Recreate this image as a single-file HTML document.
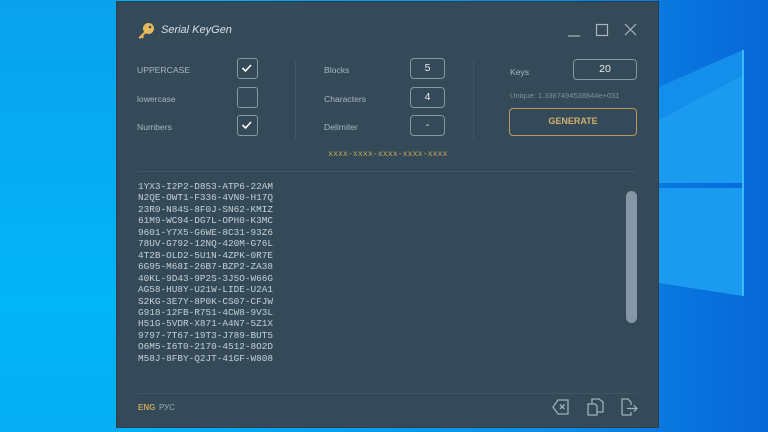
<!DOCTYPE html>
<html><head><meta charset="utf-8"><style>
*{margin:0;padding:0;box-sizing:border-box}
body{width:768px;height:432px;overflow:hidden;position:relative;font-family:"Liberation Sans",sans-serif;
background:linear-gradient(90deg,#08a8f2 0%,#03b2f6 15%,#0a8fe8 70%,#0766d8 100%);}
.bgl{position:absolute;left:0;top:0;width:120px;height:432px;background:linear-gradient(180deg,#0aa2ee 0%,#02b4f8 70%,#05aef2 100%)}
.win{position:absolute;left:116px;top:1px;width:543px;height:427px;background:#344a58;border:1px solid #2b3f4b}
.a{position:absolute}
.lbl{position:absolute;font-size:8.6px;color:#aab6be}
.cb{position:absolute;width:21px;height:21px;border:1.5px solid #8696a2;border-radius:3px}
.inp{position:absolute;width:35px;height:21px;border:1.5px solid #8696a2;border-radius:4px;color:#e8eef2;font-size:10.5px;text-align:center;line-height:18px}
.keys{position:absolute;left:138px;top:181px;font-family:"Liberation Mono",monospace;font-size:9.4px;line-height:11.45px;color:#c6d0d6;white-space:pre}
</style></head><body>
<div class="bgl"></div>
<svg class="a" style="left:659px;top:0" width="109" height="432">
<polygon points="0,87 84,50 84,183 0,183" fill="#1b9bf0"/>
<polygon points="0,188 84,188 84,296 0,283" fill="#1b9bf0"/>
<polygon points="0,87 84,50 84,75 0,120" fill="#0f86e8" opacity=".6"/>
<line x1="84" y1="50" x2="84" y2="296" stroke="#4dd0ff" stroke-width="1.5"/>
</svg>
<div class="win"></div>
<svg class="a" style="left:137px;top:22px" width="18" height="18" viewBox="0 0 18 18">
<circle cx="11.5" cy="6.5" r="5.5" fill="#e8b85c"/>
<path d="M8 9 L1.5 15.5 L3 17 L4.5 15.5 L5.5 16.5 L7 15 L6 14 L10 10 Z" fill="#e8b85c"/>
<circle cx="13" cy="5" r="1.3" fill="#344a58"/>
</svg>
<div class="a" style="left:161px;top:24px;font-size:11px;font-style:italic;color:#d8e0e6">Serial KeyGen</div>
<svg class="a" style="left:565px;top:22px" width="75" height="16">
<line x1="3" y1="14" x2="15" y2="14" stroke="#aab6be" stroke-width="1.2"/>
<rect x="31.5" y="2.5" width="11" height="11" fill="none" stroke="#aab6be" stroke-width="1.2"/>
<path d="M60 2 L71 13 M71 2 L60 13" stroke="#aab6be" stroke-width="1.2"/>
</svg>
<div class="lbl" style="left:137px;top:65px">UPPERCASE</div>
<div class="lbl" style="left:137px;top:94px">lowercase</div>
<div class="lbl" style="left:137px;top:122px">Numbers</div>
<div class="cb" style="left:237px;top:58px"><svg width="18" height="18"><path d="M4.5 9 L7.5 12 L13 6" stroke="#fff" stroke-width="1.6" fill="none"/></svg></div>
<div class="cb" style="left:237px;top:87px"></div>
<div class="cb" style="left:237px;top:115px"><svg width="18" height="18"><path d="M4.5 9 L7.5 12 L13 6" stroke="#fff" stroke-width="1.6" fill="none"/></svg></div>
<div class="a" style="left:295px;top:60px;width:1px;height:80px;background:#3f5664"></div>
<div class="a" style="left:473px;top:60px;width:1px;height:80px;background:#3f5664"></div>
<div class="lbl" style="left:324px;top:65px">Blocks</div>
<div class="lbl" style="left:324px;top:94px">Characters</div>
<div class="lbl" style="left:324px;top:122px">Delimiter</div>
<div class="inp" style="left:410px;top:58px">5</div>
<div class="inp" style="left:410px;top:87px">4</div>
<div class="inp" style="left:410px;top:115px">-</div>
<div class="lbl" style="left:510px;top:67px">Keys</div>
<div class="inp" style="left:573px;top:59px;width:64px">20</div>
<div class="a" style="left:510px;top:91px;font-size:7.5px;color:#7f909b">Unique: 1.3367494538844e+031</div>
<div class="a" style="left:509px;top:108px;width:128px;height:28px;border:1.5px solid #b89a5e;border-radius:4px;color:#d2b072;font-size:9px;font-weight:bold;text-align:center;line-height:25px">GENERATE</div>
<div class="a" style="left:328px;top:150px;font-family:'Liberation Mono',monospace;font-size:8.3px;color:#c9a55a">xxxx-xxxx-xxxx-xxxx-xxxx</div>
<div class="a" style="left:138px;top:171px;width:499px;height:1px;background:#3f5664"></div>
<div class="keys">1YX3-I2P2-D853-ATP6-22AM
N2QE-OWT1-F336-4VN0-H17Q
23R0-N84S-8F0J-SN62-KMIZ
61M9-WC94-DG7L-OPH0-K3MC
9601-Y7X5-G6WE-8C31-93Z6
78UV-G792-12NQ-420M-G76L
4T2B-OLD2-5U1N-4ZPK-0R7E
6G95-M68I-26B7-BZP2-ZA38
40KL-9D43-9P2S-3J5O-W66G
AG58-HU8Y-U21W-LIDE-U2A1
S2KG-3E7Y-8P0K-CS07-CFJW
G918-12FB-R751-4CW8-9V3L
H51G-5VDR-X871-A4N7-5Z1X
9797-7T67-19T3-J789-BUT5
O6M5-I6T0-2170-4512-8O2D
M58J-8FBY-Q2JT-41GF-W808</div>
<div class="a" style="left:626px;top:191px;width:11px;height:132px;border-radius:6px;background:#8597a6"></div>
<div class="a" style="left:138px;top:393px;width:499px;height:1px;background:#3f5664"></div>
<div class="a" style="left:138px;top:403px;font-size:8px;font-weight:bold;color:#c9a55a">ENG</div>
<div class="a" style="left:159px;top:403px;font-size:8px;color:#9aa8b2">РУС</div>
<svg class="a" style="left:550px;top:396px" width="90" height="22" fill="none" stroke="#9fb0bc" stroke-width="1.3">
<path d="M3 11 L8 4 H18 V18 H8 Z"/><path d="M10 8.5 L14.5 13 M14.5 8.5 L10 13"/>
<path d="M38 8 H45 L47 10 V19 H38 Z"/><path d="M42 8 V3 H49 L53 6 V16 H47"/>
<path d="M72 19 V3 H78 L81 6 V9 M81 16 V19 H72"/><path d="M77 12.5 H87 M84 9.5 L87 12.5 L84 15.5"/>
</svg>
</body></html>
